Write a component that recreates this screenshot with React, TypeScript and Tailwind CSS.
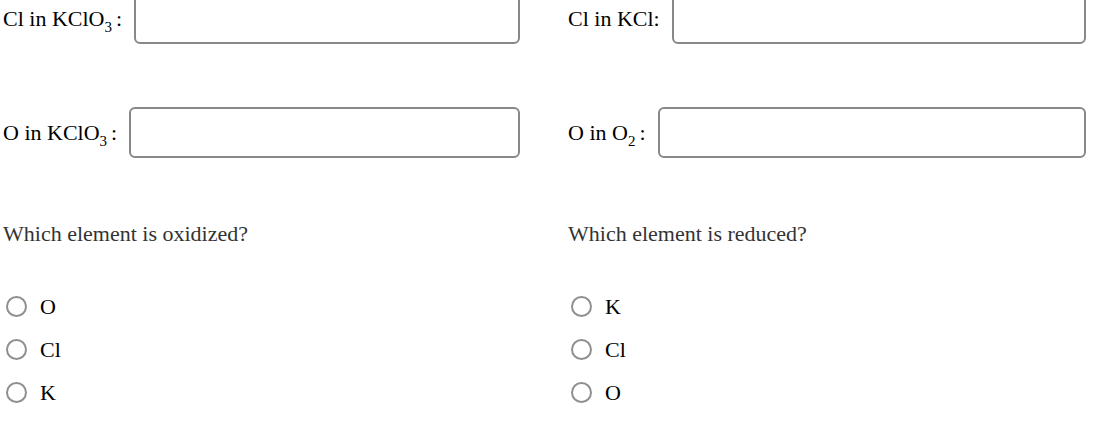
import type { ReactNode } from "react";

function Field({ label }: { label: ReactNode }) {
  return (
    <div className="flex h-[51px] items-center">
      <label className="mr-[12px] whitespace-nowrap leading-none">{label}</label>
      <input type="text" className="h-full min-w-0 flex-1 rounded-[6px] border-2 border-[#888] bg-white px-2 outline-none" />
    </div>
  );
}

function Sub({ children }: { children: ReactNode }) {
  return <sub className="relative top-[6px] mr-[4px] align-baseline text-[15px]">{children}</sub>;
}

function Choices({ name, question, options }: { name: string; question: string; options: string[] }) {
  return (
    <div>
      <p className="mt-[59px] leading-[33px] text-[#333]">{question}</p>
      <div className="mt-[35px] flex flex-col">
        {options.map((o) => (
          <label key={o} className="flex h-[43px] items-center">
            <input type="radio" name={name} className="sr-only" />
            <span className="ml-[3px] mr-[13px] h-[21px] w-[21px] flex-none rounded-full border-2 border-[#8f8f8f] bg-white" />
            <span>{o}</span>
          </label>
        ))}
      </div>
    </div>
  );
}

export default function App() {
  return (
    <div className="h-[441px] w-[1108px] overflow-hidden bg-white font-['Liberation_Serif',serif] text-[22px] text-black">
      <div className="-mt-[7px] grid grid-cols-[517px_518px] gap-x-[48px] pl-[3px]">
        <div>
          <Field label={<>Cl in KClO<Sub>3</Sub>:</>} />
          <div className="mt-[63px]">
            <Field label={<>O in KClO<Sub>3</Sub>:</>} />
          </div>
          <Choices name="ox" question="Which element is oxidized?" options={["O", "Cl", "K"]} />
        </div>
        <div>
          <Field label={<>Cl in KCl:</>} />
          <div className="mt-[63px]">
            <Field label={<>O in O<Sub>2</Sub>:</>} />
          </div>
          <Choices name="red" question="Which element is reduced?" options={["K", "Cl", "O"]} />
        </div>
      </div>
    </div>
  );
}
